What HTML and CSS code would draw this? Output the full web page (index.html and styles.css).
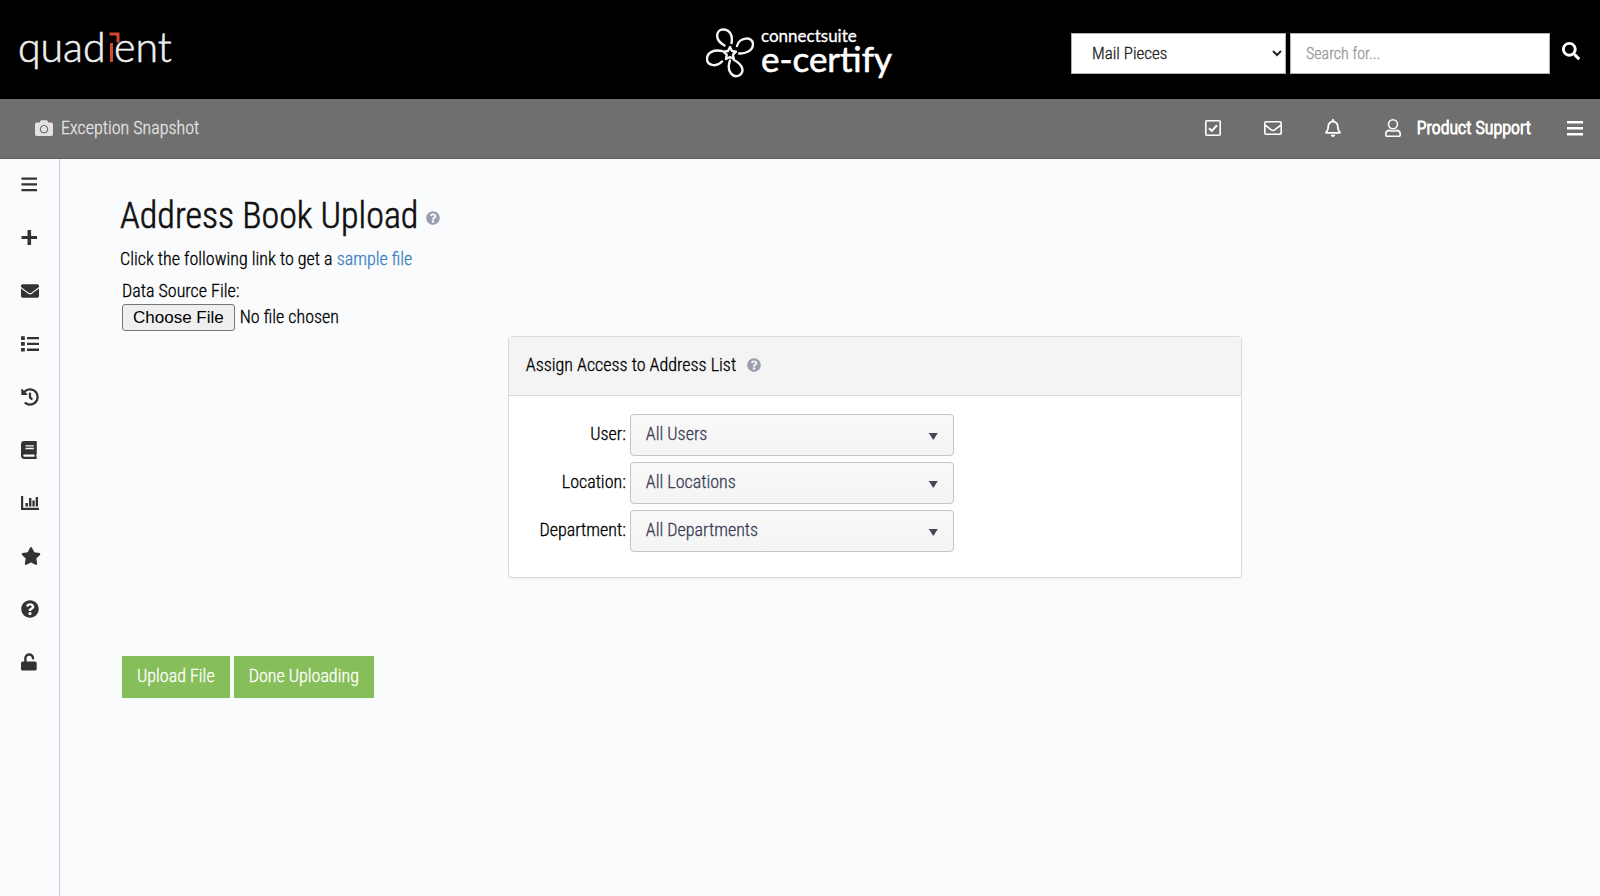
FILE: index.html
```html
<!DOCTYPE html>
<html lang="en">
<head>
<meta charset="utf-8">
<meta name="viewport" content="width=device-width, initial-scale=1">
<title>Address Book Upload</title>
<link rel="stylesheet" href="styles.css">
</head>
<body>
<svg class="sprite" aria-hidden="true">
  <symbol id="help" viewBox="0 0 512 512"><path d="M504 256c0 136.997-111.043 248-248 248S8 392.997 8 256C8 119.083 119.043 8 256 8s248 111.083 248 248zM262.655 90c-54.497 0-89.255 22.957-116.549 63.758-3.536 5.286-2.353 12.415 2.715 16.258l34.699 26.31c5.205 3.947 12.621 3.008 16.665-2.122 17.864-22.658 30.113-35.797 57.303-35.797 20.429 0 45.698 13.148 45.698 32.958 0 14.976-12.363 22.667-32.534 33.976C247.128 238.528 216 254.941 216 296v4c0 6.627 5.373 12 12 12h56c6.627 0 12-5.373 12-12v-1.333c0-28.462 83.186-29.647 83.186-106.667 0-58.002-60.165-102-116.531-102zM256 338c-25.365 0-46 20.635-46 46 0 25.364 20.635 46 46 46s46-20.636 46-46c0-25.365-20.635-46-46-46z"/></symbol>
</svg>

<header class="topbar">
  <a class="brand" href="#" aria-label="quadient home">
    <svg width="160" height="58" viewBox="-2 -4 160 58">
      <text class="brand-text" x="-2" y="37">quad</text>
      <path class="brand-mark" d="M91.500 18v19M89.500 9h8.500v8.500"/>
      <text class="brand-text" x="94" y="37">ent</text>
    </svg>
  </a>
  <a class="product" href="#" aria-label="connectsuite e-certify">
    <svg class="flower" width="48" height="50" viewBox="0 0 48 50">
      <path d="M18.500 17.500C8 12 10 1.500 17 1.500c7 0 10 6 8.500 13.500M31 18c2-9 16-10 16-2 0 7-8 10-14 9.500M28 32c8 4 11 11 6 15-7 4-14-4-10-14.500M16 33.500C10 40 1 37 1 31c0-7 7-9.500 15-8"/>
      <path d="M24 19l2 4 4 .6-3 3 .8 4.400-3.800-2-4 2 .7-4.400-3.200-3 4.500-.6z"/>
    </svg>
    <span class="product-name"><span class="product-suite">connectsuite</span><span class="product-title">e-certify</span></span>
  </a>
  <form class="search">
    <select class="search-type" aria-label="Search type"><option>Mail Pieces</option></select>
    <input class="search-text" type="text" placeholder="Search for..." aria-label="Search">
    <button class="search-go" type="button" aria-label="Search">
      <svg class="icon" width="18" height="18" viewBox="0 0 512 512"><path d="M505 442.700L405.300 343c-4.500-4.500-10.600-7-17-7H372c27.600-35.300 44-79.700 44-128C416 93.100 322.900 0 208 0S0 93.100 0 208s93.100 208 208 208c48.300 0 92.700-16.400 128-44v16.300c0 6.400 2.500 12.500 7 17l99.700 99.700c9.400 9.400 24.600 9.400 33.900 0l28.300-28.300c9.400-9.400 9.400-24.600.1-34zM208 336c-70.700 0-128-57.200-128-128 0-70.700 57.200-128 128-128 70.700 0 128 57.200 128 128 0 70.700-57.200 128-128 128z"/></svg>
    </button>
  </form>
</header>

<nav class="subbar" aria-label="Account">
  <a class="snapshot" href="#">
    <svg class="icon" width="18" height="18" viewBox="0 0 512 512"><path d="M512 144v288c0 26.500-21.500 48-48 48H48c-26.500 0-48-21.500-48-48V144c0-26.500 21.500-48 48-48h88l12.300-32.900c7-18.700 24.900-31.100 44.900-31.100h125.500c20 0 37.900 12.400 44.900 31.100L376 96h88c26.500 0 48 21.500 48 48zM376 288c0-66.200-53.800-120-120-120s-120 53.800-120 120 53.800 120 120 120 120-53.800 120-120zm-32 0c0 48.500-39.500 88-88 88s-88-39.500-88-88 39.500-88 88-88 88 39.500 88 88z"/></svg>
    Exception Snapshot
  </a>
  <div class="account">
    <a class="tool" href="#" aria-label="Tasks"><svg class="line" width="18" height="18" viewBox="0 0 18 18"><rect x="1.800" y="1.800" width="14.400" height="14.400" rx="1"/><path class="thick" d="M5 9.200l2.800 2.700L13 6.300"/></svg></a>
    <a class="tool" href="#" aria-label="Messages"><svg class="line" width="18" height="18" viewBox="0 0 18 18"><rect x=".8" y="2.800" width="16.400" height="12.400" rx="1.200"/><path d="M1 6l6 4.700q2 1.500 4 0L17 6"/></svg></a>
    <a class="tool" href="#" aria-label="Alerts"><svg class="icon" width="18" height="18" viewBox="-32 0 512 512"><path d="M439.390 362.290c-19.320-20.760-55.470-51.990-55.470-154.290 0-77.700-54.480-139.900-127.940-155.160V32c0-17.670-14.320-32-31.980-32s-31.980 14.330-31.980 32v20.840C118.560 68.100 64.080 130.300 64.080 208c0 102.300-36.150 133.530-55.470 154.290-6 6.450-8.660 14.160-8.610 21.710.11 16.400 12.980 32 32.100 32h383.800c19.120 0 32-15.600 32.100-32 .05-7.550-2.610-15.270-8.610-21.710zM67.530 368c21.220-27.970 44.420-74.330 44.530-159.420 0-.2-.06-.38-.06-.58 0-61.860 50.140-112 112-112s112 50.140 112 112c0 .2-.06.38-.06.58.11 85.100 23.310 131.460 44.530 159.420H67.530zM224 512c35.320 0 63.970-28.650 63.970-64H160.030c0 35.350 28.650 64 63.970 64z"/></svg></a>
    <a class="tool user" href="#"><svg class="line" width="18" height="18" viewBox="0 0 18 18"><circle cx="9" cy="5.300" r="4.500"/><path d="M5.500 11.400c2.300.8 4.700.8 7 0 2.500 0 3.700 1.700 3.700 3.700v1.100q0 1-1 1H2.800q-1 0-1-1v-1.100c0-2 1.200-3.700 3.700-3.700z"/></svg>Product Support</a>
    <button class="menu" type="button" aria-label="Menu"><svg class="icon" width="16" height="18" viewBox="0 0 16 18"><path d="M0 2h16v2.500H0zM0 8h16v2.500H0zM0 14h16v2.500H0z"/></svg></button>
  </div>
</nav>

<div class="layout">
  <nav class="sidebar" aria-label="Main">
    <a href="#" aria-label="Menu"><svg class="icon" width="18" height="18" viewBox="0 0 18 18"><path d="M.5 1.500H16V3.800H.5zM.5 7.300H16v2.300H.5zM.5 13H16v2.300H.5z"/></svg></a>
    <a href="#" aria-label="Add"><svg class="icon" width="18" height="18" viewBox="0 0 18 18"><path d="M6.700 1h3q.4 0 .4.400V7h5.500q.5 0 .5.500v2q0 .5-.5.500h-5.500v5.600q0 .4-.4.400h-3q-.2 0-.2-.4V10H1q-.5 0-.5-.5v-2Q.500 7 1 7h5.500V1.400q0-.4.2-.4z"/></svg></a>
    <a href="#" aria-label="Mail"><svg class="icon" width="18" height="18" viewBox="0 0 512 512"><path d="M502.300 190.800c3.900-3.100 9.700-.2 9.700 4.700V400c0 26.500-21.500 48-48 48H48c-26.500 0-48-21.500-48-48V195.600c0-5 5.700-7.800 9.700-4.700 22.400 17.400 52.100 39.500 154.100 113.600 21.100 15.400 56.700 47.800 92.200 47.600 35.700.3 72-32.800 92.300-47.600 102-74.100 131.600-96.300 154-113.700zM256 320c23.200.4 56.600-29.200 73.400-41.400 132.700-96.300 142.800-104.700 173.400-128.700 5.800-4.500 9.200-11.500 9.200-18.900v-19c0-26.500-21.500-48-48-48H48c-26.500 0-48 21.500-48 48v19c0 7.400 3.400 14.300 9.200 18.900 30.600 23.900 40.700 32.400 173.400 128.700 16.800 12.200 50.200 41.800 73.400 41.400z"/></svg></a>
    <a href="#" aria-label="Lists"><svg class="icon" width="18" height="18" viewBox="0 0 18 18"><path d="M0 1.300h3.800V5H0zM0 7.100h3.800v3.700H0zM0 12.900h3.800v3.700H0zM6 2h12v2.300H6zM6 7.800h12v2.300H6zM6 13.600h12v2.300H6z"/></svg></a>
    <a href="#" aria-label="History"><svg class="icon" width="18" height="18" viewBox="0 0 512 512"><path d="M504 255.531c.253 136.640-111.180 248.372-247.820 248.468-59.015.042-113.223-20.530-155.822-54.911-11.077-8.940-11.905-25.541-1.839-35.607l11.267-11.267c8.609-8.609 22.353-9.551 31.891-1.984C173.062 425.135 212.781 440 256 440c101.705 0 184-82.311 184-184 0-101.705-82.311-184-184-184-48.814 0-93.149 18.969-126.068 49.932l50.754 50.754c10.080 10.080 2.941 27.314-11.313 27.314H24c-8.837 0-16-7.163-16-16V38.627c0-14.254 17.234-21.393 27.314-11.314l49.372 49.372C129.209 34.136 189.552 8 256 8c136.810 0 247.747 110.780 248 247.531zm-180.912 78.784l9.823-12.630c8.138-10.463 6.253-25.542-4.210-33.679L288 256.349V152c0-13.255-10.745-24-24-24h-16c-13.255 0-24 10.745-24 24v135.651l65.409 50.874c10.463 8.137 25.541 6.253 33.679-4.210z"/></svg></a>
    <a href="#" aria-label="Address book"><svg class="icon" width="18" height="18" viewBox="0 0 18 18"><path fill-rule="evenodd" d="M3.300 0H15q.8 0 .8.800v11.600q0 .5-.4.800-.3 1.200 0 2.500.4.200.4.700v.8q0 .8-.8.800H3.300Q0 18 0 14.600V3.400Q0 0 3.300 0zM4.500 4.200v1.400h8.300V4.200zM4.500 6.800v1.400h8.300V6.800zM3.300 13.500q-1.100 0-1.100 1.100t1.100 1.100h10.200v-2.200z"/></svg></a>
    <a href="#" aria-label="Reports"><svg class="icon" width="18" height="18" viewBox="0 0 18 18"><path d="M0 2h2.200v11.800H18V16H0zM4.500 9H7v3.500H4.500zM8 4h2.400v8.500H8zM11.400 6.500h2.300v6h-2.300zM14.700 3H17v9.500h-2.300z"/></svg></a>
    <a href="#" aria-label="Favorites"><svg class="icon" width="20" height="18" viewBox="0 0 576 512"><path d="M259.300 17.800L194 150.200 47.900 171.500c-26.200 3.800-36.700 36.100-17.700 54.600l105.700 103-25 145.500c-4.500 26.300 23.200 46 46.400 33.700L288 439.600l130.700 68.700c23.200 12.200 50.900-7.400 46.400-33.700l-25-145.500 105.700-103c19-18.500 8.500-50.800-17.700-54.600L382 150.200 316.700 17.800c-11.700-23.600-45.600-23.900-57.400 0z"/></svg></a>
    <a href="#" aria-label="Help"><svg class="icon" width="18" height="18"><use href="#help"/></svg></a>
    <a href="#" aria-label="Unlock"><svg class="icon" width="18" height="18" viewBox="0 0 18 18"><path d="M1.600 8.500H3.200V5.300a5 5 0 0 1 10 0v.5q0 .8-.8.800h-.8q-.8 0-.8-.8v-.5a2.600 2.600 0 0 0-5.200 0v3.200h8.500q1.600 0 1.600 1.600v5.900q0 1.600-1.600 1.600H1.600Q0 17.600 0 16v-5.900q0-1.600 1.600-1.600z"/></svg></a>
  </nav>

  <main class="content">
    <h1 class="title">Address Book Upload <svg class="hint" width="14" height="14"><use href="#help"/></svg></h1>
    <p class="intro">Click the following link to get a <a href="#">sample file</a></p>
    <div class="source">
      <label for="file">Data Source File:</label>
      <input class="file" id="file" type="file">
    </div>

    <section class="panel">
      <h2 class="panel-head">Assign Access to Address List <svg class="hint" width="14" height="14"><use href="#help"/></svg></h2>
      <div class="panel-body">
        <label for="user">User:</label>
        <div class="pick"><select id="user"><option>All Users</option></select></div>
        <label for="location">Location:</label>
        <div class="pick"><select id="location"><option>All Locations</option></select></div>
        <label for="department">Department:</label>
        <div class="pick"><select id="department"><option>All Departments</option></select></div>
      </div>
    </section>

    <div class="actions">
      <button type="button">Upload File</button>
      <button type="button">Done Uploading</button>
    </div>
  </main>
</div>
</body>
</html>
```

FILE: styles.css
```css
* { box-sizing: border-box; }

body {
  margin: 0;
  min-height: 100vh;
  display: flex;
  flex-direction: column;
  background: #fafbfd;
  color: #000;
  font: 300 18px/24px "Roboto Condensed", "Liberation Sans Narrow", Roboto, sans-serif;
  -webkit-text-stroke: 0.3px;
}

button, input, select { font: inherit; -webkit-text-stroke: inherit; }
a { text-decoration: none; }
svg { display: block; flex: none; }
.sprite { position: absolute; width: 0; height: 0; }
.icon { fill: currentColor; }
.line { fill: none; stroke: currentColor; stroke-width: 1.6; }
.thick { stroke-width: 2; }

.topbar {
  display: grid;
  grid-template-columns: 1fr auto 1fr;
  align-items: center;
  height: 99px;
  padding: 0 20px 0 18px;
  background: #000;
}
.brand-text { fill: #eee; stroke: #eee; stroke-width: 0.6; font: 300 41px Lato, sans-serif; }
.brand-mark { fill: none; stroke: #d3492f; stroke-width: 3; }
.product { display: flex; align-items: center; gap: 7px; padding-top: 7px; color: #fff; }
.flower { fill: none; stroke: #f4f4f4; stroke-width: 2.4; stroke-linejoin: round; stroke-linecap: round; }
.product-name { display: flex; flex-direction: column; padding-bottom: 8px; font-family: Lato, sans-serif; font-weight: 400; }
.product-suite { font-size: 17px; line-height: 18px; }
.product-title { font-size: 35px; line-height: 26px; -webkit-text-stroke: 0.6px; }

.search { display: flex; justify-content: flex-end; align-items: center; gap: 4px; padding-top: 7px; }
.search-type, .search-text {
  height: 41px;
  border: 1px solid #aeb2b8;
  border-radius: 0;
  background: #fff;
  color: #222;
  font-size: 17px;
}
.search-type { width: 215px; padding: 0 0 0 16px; }
.search-text { width: 260px; padding: 0 15px; font-size: 16px; }
.search-text::placeholder { color: #999; }
.search-go { padding: 0 0 4px 8px; border: 0; background: none; color: #fff; }

.subbar {
  display: flex;
  justify-content: space-between;
  align-items: center;
  height: 60px;
  padding: 0 17px 1px 35px;
  border-bottom: 1px solid #5c5c5c;
  background: #6f6f6f;
}
.snapshot { display: flex; align-items: center; gap: 8px; color: #e2e2e2; }
.account { display: flex; align-items: center; gap: 42px; }
.tool { color: #fff; }
.user { display: flex; align-items: center; gap: 15px; font-weight: 300; -webkit-text-stroke: 1px; }
.menu { margin-left: -6px; padding: 0; border: 0; background: none; color: #fff; }

.layout { display: flex; flex: 1; }
.sidebar {
  display: flex;
  flex-direction: column;
  gap: 35px;
  width: 60px;
  padding: 17px 0 0 21px;
  border-right: 1px solid #c9cad6;
}
.sidebar a { color: #333; }

.content { flex: 1; padding: 35px 11px 40px 60px; }
.title { display: flex; align-items: center; gap: 8px; margin: 0; font-size: 36px; line-height: 44px; font-weight: 300; color: #111; -webkit-text-stroke: 0.6px; }
.title .hint { margin-top: 3px; }
.hint { fill: #9a9fb0; }
.intro { margin: 9px 0 8px; }
.intro a { color: #3f83bd; }
.source { display: flex; flex-direction: column; align-items: flex-start; gap: 1px; padding-left: 2px; }
.file { max-width: 100%; }
.file::file-selector-button {
  height: 27px;
  margin-right: 5px;
  padding: 0 10px;
  border: 1px solid #767676;
  border-radius: 3px;
  background: #efefef;
  color: #000;
  font: 17px/24px "Liberation Sans", Arial, sans-serif;
  -webkit-text-stroke: 0;
}

.panel {
  width: 50%;
  margin: 5px 0 0 26.4%;
  border: 1px solid #dadada;
  border-radius: 4px;
  background: #fff;
  box-shadow: 0 1px 1px #0000000d;
}
.panel-head {
  display: flex;
  align-items: center;
  gap: 11px;
  margin: 0;
  padding: 16px 17px 18px;
  border-bottom: 1px solid #d8d8d8;
  background: #f4f4f4;
  font-size: 18px;
  line-height: 24px;
  font-weight: 300;
}
.panel-body {
  display: grid;
  grid-template-columns: 100px minmax(0, 324px);
  gap: 6px 4px;
  padding: 18px 17px 25px;
}
.panel-body label { padding-top: 8px; text-align: right; }
.pick { position: relative; }
.pick::after {
  content: "";
  position: absolute;
  right: 16px;
  top: 19px;
  width: 9px;
  height: 7px;
  background: #434856;
  clip-path: polygon(0 0, 100% 0, 50% 100%);
  pointer-events: none;
}
.pick select {
  display: block;
  appearance: none;
  width: 100%;
  height: 42px;
  padding: 0 36px 2px 15px;
  border: 1px solid #c3c4ca;
  border-radius: 4px;
  background: linear-gradient(#f9f9f9, #f4f4f4);
  color: #3b4056;
}

.actions { display: flex; flex-wrap: wrap; gap: 4px; margin-top: 78px; padding-left: 2px; }
.actions button { height: 42px; padding: 0 15px 2px; border: 0; background: #86be59; color: #fff; }
```
